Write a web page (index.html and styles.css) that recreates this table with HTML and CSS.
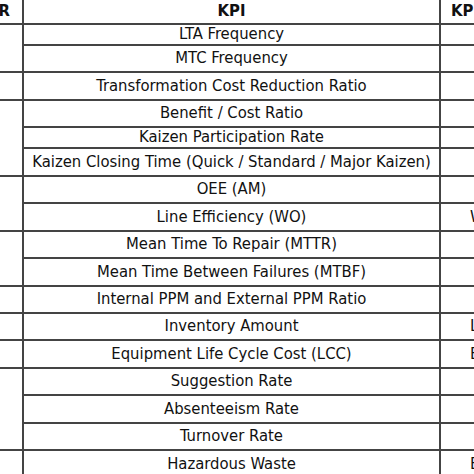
FILE: index.html
```html
<!DOCTYPE html>
<html>
<head>
<meta charset="utf-8">
<link rel="stylesheet" href="styles.css">
</head>
<body>
<table class="kpi">
  <colgroup>
    <col class="col1">
    <col class="col2">
    <col class="col3">
  </colgroup>
  <tr class="head">
    <th class="c1">PILLAR</th>
    <th class="c2">KPI</th>
    <th class="c3 hd">KPI Owner</th>
  </tr>
  <tr class="short">
    <td class="c1" rowspan="2"></td>
    <td class="c2">LTA Frequency</td>
    <td class="c3"></td>
  </tr>
  <tr class="mid">
    <td class="c2">MTC Frequency</td>
    <td class="c3"></td>
  </tr>
  <tr class="tall">
    <td class="c1"></td>
    <td class="c2">Transformation Cost Reduction Ratio</td>
    <td class="c3"></td>
  </tr>
  <tr class="mid">
    <td class="c1" rowspan="3"></td>
    <td class="c2">Benefit / Cost Ratio</td>
    <td class="c3"></td>
  </tr>
  <tr class="short">
    <td class="c2">Kaizen Participation Rate</td>
    <td class="c3"></td>
  </tr>
  <tr class="tall">
    <td class="c2">Kaizen Closing Time (Quick / Standard / Major Kaizen)</td>
    <td class="c3"></td>
  </tr>
  <tr class="mid">
    <td class="c1" rowspan="2"></td>
    <td class="c2">OEE (AM)</td>
    <td class="c3 far">AM</td>
  </tr>
  <tr class="tall">
    <td class="c2">Line Efficiency (WO)</td>
    <td class="c3">WO</td>
  </tr>
  <tr class="mid">
    <td class="c1" rowspan="2"></td>
    <td class="c2">Mean Time To Repair (MTTR)</td>
    <td class="c3"></td>
  </tr>
  <tr class="tall">
    <td class="c2">Mean Time Between Failures (MTBF)</td>
    <td class="c3"></td>
  </tr>
  <tr class="mid">
    <td class="c1"></td>
    <td class="c2">Internal PPM and External PPM Ratio</td>
    <td class="c3"></td>
  </tr>
  <tr class="mid">
    <td class="c1"></td>
    <td class="c2">Inventory Amount</td>
    <td class="c3">Logistics</td>
  </tr>
  <tr class="tall">
    <td class="c1"></td>
    <td class="c2">Equipment Life Cycle Cost (LCC)</td>
    <td class="c3">EEM</td>
  </tr>
  <tr class="mid">
    <td class="c1" rowspan="3"></td>
    <td class="c2">Suggestion Rate</td>
    <td class="c3"></td>
  </tr>
  <tr class="tall">
    <td class="c2">Absenteeism Rate</td>
    <td class="c3"></td>
  </tr>
  <tr class="mid">
    <td class="c2">Turnover Rate</td>
    <td class="c3"></td>
  </tr>
  <tr class="tall">
    <td class="c1"></td>
    <td class="c2">Hazardous Waste</td>
    <td class="c3">Environment</td>
  </tr>
</table>
</body>
</html>
```
FILE: styles.css
```css
html, body {
  margin: 0;
  padding: 0;
  background: #fff;
  overflow: hidden;
  width: 474px;
  height: 474px;
}

.kpi {
  border-collapse: collapse;
  table-layout: fixed;
  width: 617px;
  margin-left: -61px;
  margin-top: -2px;
  font-family: "DejaVu Sans Condensed", "DejaVu Sans", sans-serif;
  font-size: 16.5px;
  line-height: 1;
  color: #111;
}

.col1 { width: 83px; }
.col2 { width: 417px; }
.col3 { width: 117px; }

.kpi th,
.kpi td {
  border: 2px solid #444;
  padding: 0;
  vertical-align: middle;
  white-space: nowrap;
  overflow: hidden;
}

.kpi th {
  font-weight: bold;
}

.kpi .c1 {
  text-align: right;
  padding-right: 12px;
}

.kpi .c2 {
  text-align: center;
}

.kpi .c3 {
  text-align: left;
  padding-left: 29px;
}

.kpi .c3.hd {
  padding-left: 10px;
}

.kpi .c3.far {
  padding-left: 33px;
}

.head th {
  height: 23px;
}

.short td {
  height: 19px;
}

.mid td {
  height: 25px;
}

.tall td {
  height: 26px;
}
```
